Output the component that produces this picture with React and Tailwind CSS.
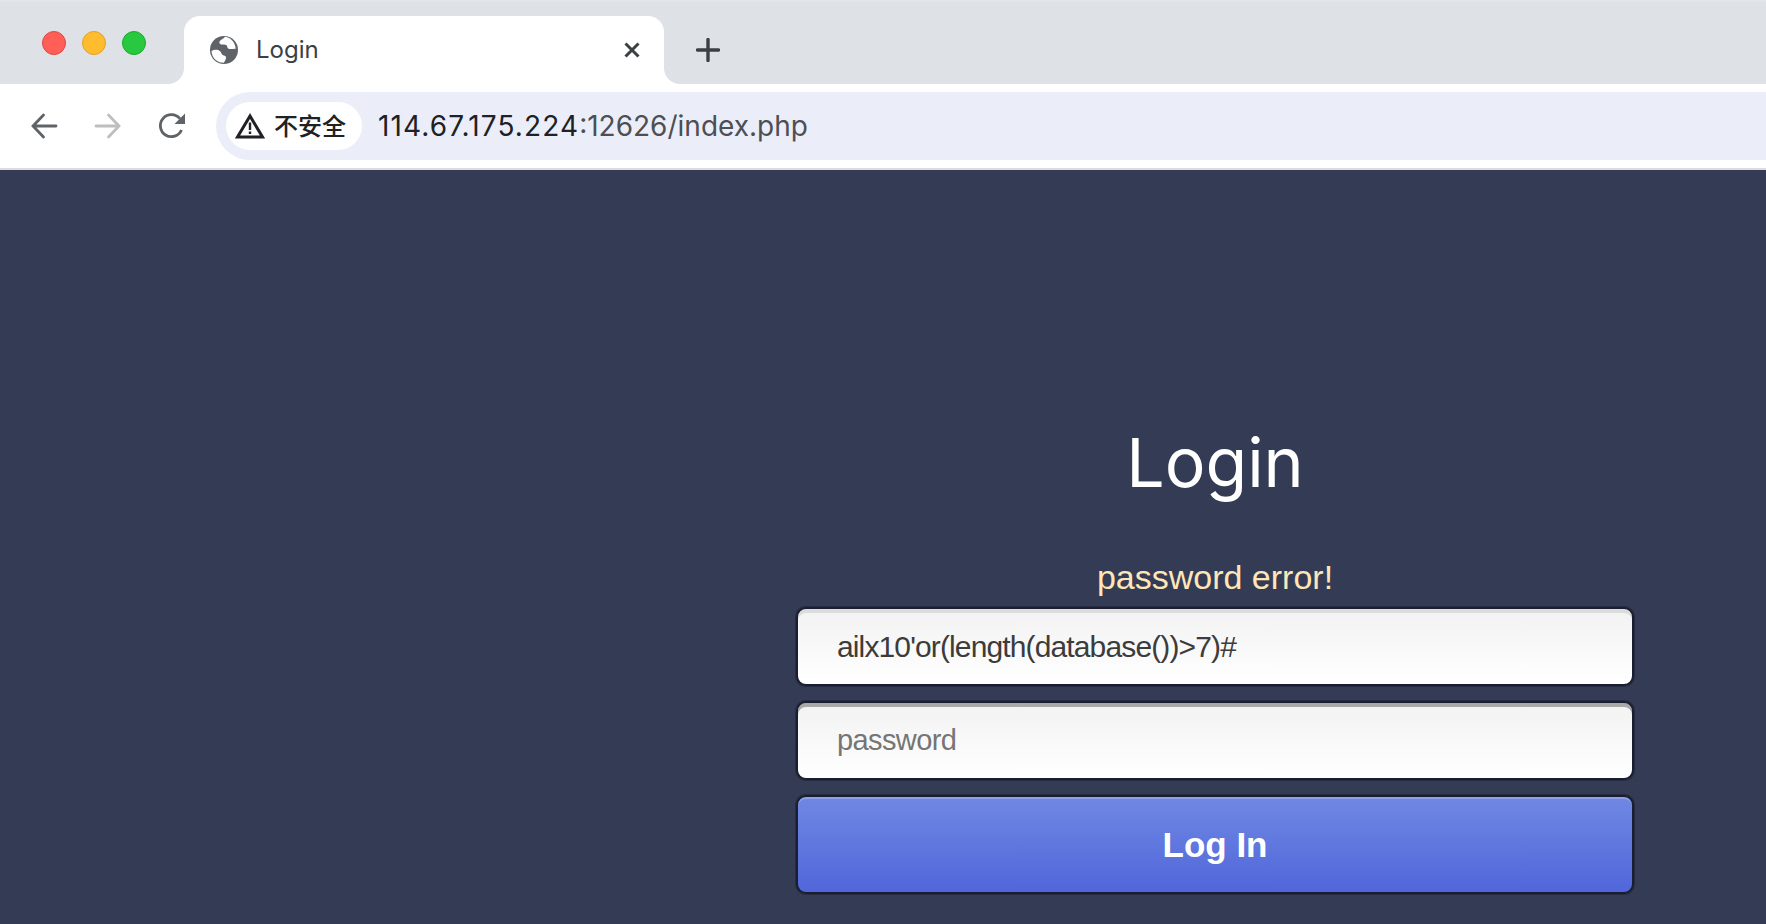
import React from 'react';

const sans = 'font-["Liberation_Sans",Arial,sans-serif]';

const Globe = () => (
  <svg width="28" height="28" viewBox="0 0 28 28" className="shrink-0">
    <circle cx="14" cy="14" r="14" fill="#5f6368" />
    <path d="M15 .8c-1.200 2.200-4 2.600-5.200 4.200-1 1.500-.2 3 1.500 3.500 2 .5 4-.2 5.200.8 1 .9.500 2.700 2 3.400 2.300 1 5.500-.3 7.200.2-.3-6.300-4.700-11.400-10.700-12.100z" fill="#fff" />
    <path d="M1.500 15c3-1.800 6.500-1.300 8.500.2 1.800 1.400 1.200 3 2.700 3.900 1.400.8 3 .6 3.300 2 .3 1.800-.8 3.500-2.200 5.700-6.800.1-12-5-12.300-11.800z" fill="#fff" />
  </svg>
);

const BackArrow = ({ color }) => (
  <svg width="28" height="28" viewBox="0 0 28 28" fill="none" stroke={color} strokeWidth="2.800" strokeLinecap="round">
    <path d="M26 14H3.500M13.500 3 3 14l10.500 11" />
  </svg>
);

const ForwardArrow = ({ color }) => (
  <svg width="28" height="28" viewBox="0 0 28 28" fill="none" stroke={color} strokeWidth="2.800" strokeLinecap="round">
    <path d="M2 14h22.500M14.500 3 25 14 14.500 25" />
  </svg>
);

const Reload = () => (
  <svg width="28" height="28" viewBox="0 0 28 28" fill="none">
    <path d="M23.500 18a11 11 0 1 1-1.600-11.300" stroke="#5f6368" strokeWidth="2.800" />
    <path d="M27 1.500V12H16.500z" fill="#5f6368" />
  </svg>
);

const Warning = () => (
  <svg width="30" height="26" viewBox="0 0 30 26" fill="none">
    <path d="M15 3 2.500 24h25z" stroke="#202124" strokeWidth="3" />
    <path d="M13.800 9.500h2.400v7.500h-2.400zM13.800 18.500h2.400v2.400h-2.400z" fill="#202124" />
  </svg>
);

const fieldClass =
  `h-[79px] w-full rounded-[10px] border-2 border-[#1a1e30] bg-gradient-to-b from-[#f2f2f2] to-white px-[39px] text-[#3c3c3c] placeholder:text-[#757575] outline-none ${sans}`;

export default function App() {
  return (
    <div className="flex h-screen flex-col overflow-hidden bg-[#343b55]">
      {/* tab strip */}
      <div className="flex h-[84px] shrink-0 bg-white">
        <div className="flex w-[184px] items-start gap-4 rounded-br-[16px] border-t-2 border-[#e4e5e7] bg-[#dee1e6] pl-[42px] pt-[29px]">
          <span className="h-6 w-6 rounded-full border border-[#e2463f] bg-[#ff5f57]" />
          <span className="h-6 w-6 rounded-full border border-[#e1a325] bg-[#febc2e]" />
          <span className="h-6 w-6 rounded-full border border-[#1aab29] bg-[#28c840]" />
        </div>
        <div className="w-[480px] border-t-2 border-[#e4e5e7] bg-[#dee1e6] pt-[14px]">
          <div className="flex h-[68px] items-center rounded-t-[16px] bg-white pl-[26px] pr-[23px]">
            <Globe />
            <span className="ml-[18px] flex-1 font-['Inter',sans-serif] text-[24px] text-[#3c4043]">Login</span>
            <svg width="18" height="18" viewBox="0 0 18 18" stroke="#3c4043" strokeWidth="3">
              <path d="M2.500 2.500l13 13M15.500 2.500l-13 13" />
            </svg>
          </div>
        </div>
        <div className="flex flex-1 items-center rounded-bl-[16px] border-t-2 border-[#e4e5e7] bg-[#dee1e6] pl-[32px] pt-[14px]">
          <svg width="24" height="24" viewBox="0 0 24 24" stroke="#3c4043" strokeWidth="3.400" strokeLinecap="round">
            <path d="M12 1.500v21M1.500 12h21" />
          </svg>
        </div>
      </div>

      {/* toolbar */}
      <div className="flex h-[86px] shrink-0 items-center border-b-2 border-[#dadce0] bg-white pl-[30px]">
        <BackArrow color="#5f6368" />
        <div className="ml-[36px]"><ForwardArrow color="#bdbec0" /></div>
        <div className="ml-[36px]"><Reload /></div>
        <div className="ml-[30px] flex h-[68px] flex-1 items-center rounded-l-full bg-[#ebeef8] pl-[10px]">
          <div className="flex h-[48px] w-[136px] items-center rounded-full bg-white pl-[9px]">
            <Warning />
            <span className="ml-[9px] pb-[3px] font-['Noto_Sans_CJK_SC',sans-serif] text-[24px] font-medium leading-none text-[#202124]">不安全</span>
          </div>
          <div className="ml-[16px] font-['Inter',sans-serif] text-[28px]">
            <span className="tracking-[1.1px] text-[#202124]">114.67.175.224</span>
            <span className="text-[#4d4f53]">:12626/index.php</span>
          </div>
        </div>
      </div>

      {/* login form */}
      <main className="flex flex-1 justify-end pr-[132px] pt-[252px]">
        <form className="flex w-[838px] flex-col items-center">
          <h1 className="font-['Inter',sans-serif] text-[68px] font-normal leading-[80px] text-white">Login</h1>
          <p className={`mt-[55px] text-[34px] leading-[40px] text-[#ffe6b8] ${sans}`}>password error!</p>
          <input
            readOnly
            value="ailx10'or(length(database())>7)#"
            className={`mt-[10px] text-[30px] tracking-[-0.87px] shadow-[inset_0_4px_0_#dcdcdc,0_0_0_1px_rgba(26,30,48,0.5)] ${fieldClass}`}
          />
          <input
            readOnly
            type="password"
            placeholder="password"
            className={`mt-[15px] text-[29px] tracking-[-0.6px] shadow-[inset_0_4px_0_#a9a9a9,0_0_0_1px_rgba(26,30,48,0.5)] ${fieldClass}`}
          />
          <button
            type="button"
            className={`mt-[15px] h-[99px] w-full rounded-[10px] border-2 border-[#1a1e30] bg-gradient-to-b from-[#7088e3] to-[#5166da] pt-[2px] text-[35px] font-bold text-white shadow-[inset_0_2px_0_#8ea1e8,0_0_0_1px_rgba(26,30,48,0.5)] ${sans}`}
          >
            Log In
          </button>
        </form>
      </main>
    </div>
  );
}
